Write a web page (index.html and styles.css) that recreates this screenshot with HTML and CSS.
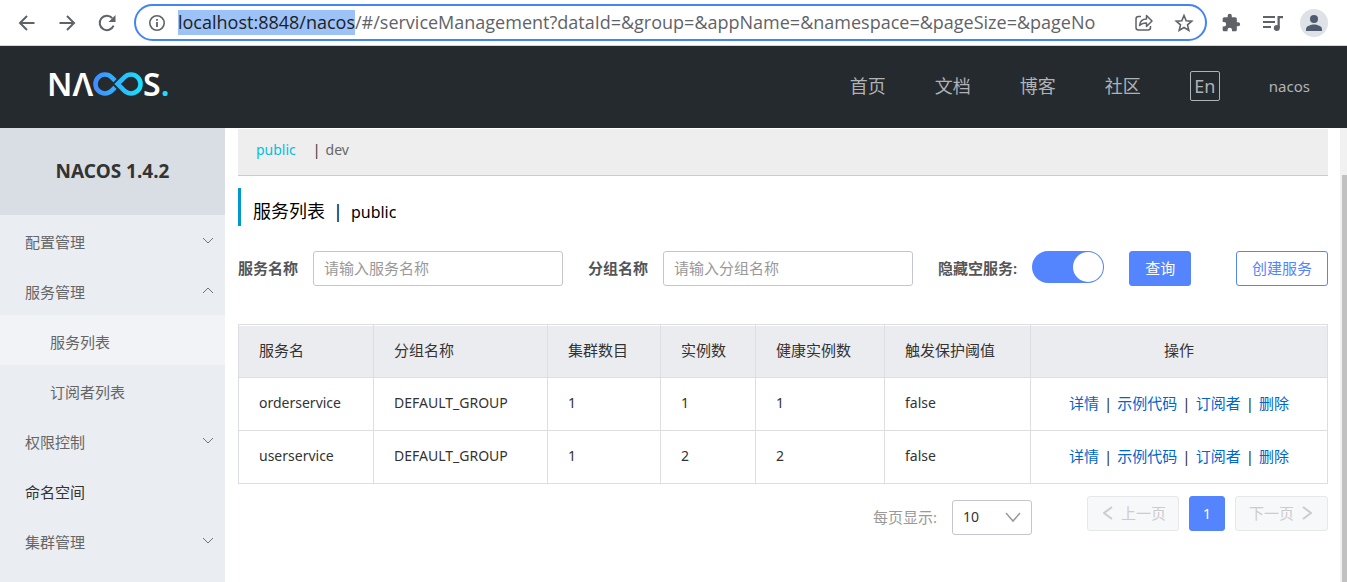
FILE: index.html
```html
<!DOCTYPE html>
<html lang="zh-CN">
<head>
  <meta charset="UTF-8">
  <meta name="viewport" content="width=device-width, initial-scale=1.0">
  <title>Nacos</title>
  <link rel="stylesheet" href="styles.css">
</head>
<body>

  <div class="browser-bar">
    <button class="bar-btn" type="button" aria-label="Back">
      <svg width="18" height="18" viewBox="0 0 18 18"><path d="M16.500 9H2.500M9 2L2 9l7 7" fill="none" stroke="#5f6368" stroke-width="2"/></svg>
    </button>
    <button class="bar-btn" type="button" aria-label="Forward">
      <svg width="18" height="18" viewBox="0 0 18 18"><path d="M1.500 9h14M9 2l7 7-7 7" fill="none" stroke="#5f6368" stroke-width="2"/></svg>
    </button>
    <button class="bar-btn" type="button" aria-label="Reload">
      <svg width="18" height="18" viewBox="0 0 18 18"><path d="M15.600 11.600A7.200 7.200 0 1 1 14.200 4" fill="none" stroke="#5f6368" stroke-width="2"/><path d="M17.500 1v7h-7z" fill="#5f6368"/></svg>
    </button>
    <div class="address">
      <svg class="info" width="18" height="18" viewBox="0 0 18 18"><circle cx="9" cy="9" r="7.200" fill="none" stroke="#5f6368" stroke-width="1.600"/><path d="M9 8v5M9 5v1.800" stroke="#5f6368" stroke-width="1.800"/></svg>
      <div class="url"><span class="selected">localhost:8848/nacos</span>/#/serviceManagement?dataId=&amp;group=&amp;appName=&amp;namespace=&amp;pageSize=&amp;pageNo</div>
      <button class="bar-btn" type="button" aria-label="Share">
        <svg width="20" height="20" viewBox="0 0 20 20"><path d="M7 3.500H4.500Q2 3.500 2 6v8.500Q2 17 4.500 17h9.500Q16.500 17 16.500 14.500V13M5.500 12.500C6 8.500 8.500 6 12.500 6V2.500l5.500 5.500-5.500 5.500V10C9.500 10 7.500 10.500 5.500 12.500z" fill="none" stroke="#5f6368" stroke-width="1.500" stroke-linejoin="round"/></svg>
      </button>
      <button class="bar-btn" type="button" aria-label="Bookmark">
        <svg width="20" height="20" viewBox="0 0 20 20"><path d="M10 2.500l2.200 5.200 5.600.500-4.300 3.700 1.300 5.500-4.800-2.900-4.800 2.900 1.300-5.500L2.200 8.200l5.600-.500z" fill="none" stroke="#5f6368" stroke-width="1.600"/></svg>
      </button>
    </div>
    <button class="bar-btn" type="button" aria-label="Extensions">
      <svg width="20" height="20" viewBox="0 0 24 24"><path d="M20.500 11H19V7c0-1.100-.900-2-2-2h-4V3.500a2.500 2.500 0 0 0-5 0V5H4c-1.100 0-2 .900-2 2v3.800h1.500a2.700 2.700 0 0 1 0 5.400H2V20c0 1.100.900 2 2 2h3.800v-1.500a2.700 2.700 0 0 1 5.400 0V22H17c1.100 0 2-.900 2-2v-4h1.500a2.500 2.500 0 0 0 0-5z" fill="#5f6368"/></svg>
    </button>
    <button class="bar-btn media" type="button" aria-label="Media">
      <svg width="20" height="18" viewBox="0 0 20 18"><path d="M0 3h12M0 8h12M0 13h8" stroke="#5f6368" stroke-width="2"/><path d="M14.500 2H20v2.200h-3.200V14h-2.300z" fill="#5f6368"/><circle cx="13.800" cy="14" r="3" fill="#5f6368"/></svg>
    </button>
    <button class="bar-btn" type="button" aria-label="Profile">
      <svg width="28" height="28" viewBox="0 0 28 28"><circle cx="14" cy="14" r="14" fill="#dee1e6"/><circle cx="14" cy="10" r="4" fill="#4f5b6e"/><path d="M6 22v-2c0-3 5-4.500 8-4.500s8 1.500 8 4.500v2z" fill="#4f5b6e"/></svg>
    </button>
  </div>

  <header class="header">
    <a class="logo" href="#" aria-label="Nacos">
      <span>NΛ</span>
      <svg width="50" height="24" viewBox="0 0 50 24">
        <defs>
          <linearGradient id="loop" gradientUnits="userSpaceOnUse" x1="0" y1="0" x2="50" y2="0">
            <stop offset="0" stop-color="#4489ff"/>
            <stop offset="1" stop-color="#18e2fa"/>
          </linearGradient>
        </defs>
        <path d="M22 8.600L18.700 5.300A9.500 9.500 0 1 0 18.700 18.700L22 15.400M24.600 12L31.300 5.300A9.500 9.500 0 1 1 31.300 18.700z" fill="none" stroke="url(#loop)" stroke-width="4.600"/>
      </svg>
      <span>S</span><span class="dot">.</span>
    </a>
    <nav class="nav">
      <a href="#">首页</a>
      <a href="#">文档</a>
      <a href="#">博客</a>
      <a href="#">社区</a>
      <button class="lang" type="button">En</button>
      <a class="user" href="#">nacos</a>
    </nav>
  </header>

  <div class="layout">
    <aside class="sidebar">
      <h1 class="version">NACOS 1.4.2</h1>
      <ul class="menu">
        <li><a href="#">配置管理<svg width="12" height="12" viewBox="0 0 12 12"><path d="M1 3l5 5 5-5"/></svg></a></li>
        <li><a href="#">服务管理<svg width="12" height="12" viewBox="0 0 12 12"><path d="M1 8l5-5 5 5"/></svg></a></li>
        <li><a class="sub active" href="#">服务列表</a></li>
        <li><a class="sub" href="#">订阅者列表</a></li>
        <li><a href="#">权限控制<svg width="12" height="12" viewBox="0 0 12 12"><path d="M1 3l5 5 5-5"/></svg></a></li>
        <li><a class="leaf" href="#">命名空间</a></li>
        <li><a href="#">集群管理<svg width="12" height="12" viewBox="0 0 12 12"><path d="M1 3l5 5 5-5"/></svg></a></li>
      </ul>
    </aside>

    <main class="main">
      <div class="namespaces">
        <a class="current" href="#">public</a>
        <span class="bar">|</span>
        <a href="#">dev</a>
      </div>

      <h2 class="title">服务列表<span class="sep">|</span><span class="ns">public</span></h2>

      <form class="filters">
        <label for="service">服务名称</label>
        <input class="text" type="text" id="service" placeholder="请输入服务名称">
        <label for="group">分组名称</label>
        <input class="text" type="text" id="group" placeholder="请输入分组名称">
        <label for="hide">隐藏空服务:</label>
        <input class="switch" type="checkbox" id="hide" checked>
        <button class="btn primary" type="button">查询</button>
        <button class="btn create" type="button">创建服务</button>
      </form>

      <table class="services">
        <colgroup>
          <col class="c-name"><col class="c-group"><col class="c-cluster"><col class="c-count"><col class="c-healthy"><col class="c-protect"><col>
        </colgroup>
        <thead>
          <tr>
            <th>服务名</th>
            <th>分组名称</th>
            <th>集群数目</th>
            <th>实例数</th>
            <th>健康实例数</th>
            <th>触发保护阈值</th>
            <th class="actions">操作</th>
          </tr>
        </thead>
        <tbody>
          <tr>
            <td>orderservice</td>
            <td>DEFAULT_GROUP</td>
            <td>1</td>
            <td>1</td>
            <td>1</td>
            <td>false</td>
            <td class="actions"><a href="#">详情</a><i>|</i><a href="#">示例代码</a><i>|</i><a href="#">订阅者</a><i>|</i><a href="#">删除</a></td>
          </tr>
          <tr>
            <td>userservice</td>
            <td>DEFAULT_GROUP</td>
            <td>1</td>
            <td>2</td>
            <td>2</td>
            <td>false</td>
            <td class="actions"><a href="#">详情</a><i>|</i><a href="#">示例代码</a><i>|</i><a href="#">订阅者</a><i>|</i><a href="#">删除</a></td>
          </tr>
        </tbody>
      </table>

      <div class="pager">
        <label for="size">每页显示:</label>
        <div class="select">
          <select id="size">
            <option>10</option>
            <option>20</option>
          </select>
          <svg width="16" height="12" viewBox="0 0 16 12"><path d="M1 1l7 8 7-8" fill="none" stroke="#999" stroke-width="1.500"/></svg>
        </div>
        <div class="pages">
          <button class="page" type="button" disabled><svg width="10" height="14" viewBox="0 0 10 14"><path d="M9 1L1 7l8 6"/></svg>上一页</button>
          <button class="page on" type="button">1</button>
          <button class="page next" type="button" disabled>下一页<svg width="10" height="14" viewBox="0 0 10 14"><path d="M1 1l8 6-8 6"/></svg></button>
        </div>
      </div>
    </main>

    <div class="scrollbar"><div class="thumb"></div></div>
  </div>

</body>
</html>
```
FILE: styles.css
```css
* {
  box-sizing: border-box;
}

body {
  display: flex;
  flex-direction: column;
  min-height: 100vh;
  margin: 0;
  color: #333;
  background: #fff;
  font: 15px/20px "Noto Sans", "Noto Sans CJK SC", sans-serif;
}

a {
  color: inherit;
  text-decoration: none;
}

button, input, select {
  font: inherit;
}

/* browser bar */
.browser-bar {
  display: flex;
  align-items: center;
  gap: 22px;
  height: 46px;
  padding: 0 19px 0 18px;
  border-bottom: 1px solid #d5d7da;
}

.bar-btn {
  display: flex;
  padding: 0;
  border: 0;
  background: none;
}

.media {
  margin-right: -5px;
}

.address {
  display: flex;
  flex: 1;
  align-items: center;
  gap: 20px;
  min-width: 0;
  height: 37px;
  margin: 0 -8px 0 -4px;
  padding: 0 11px 0 12px;
  border: 2px solid #4285f4;
  border-radius: 19px;
}

.address .info {
  flex: none;
  margin-right: -8px;
}

.url {
  flex: 1;
  overflow: hidden;
  color: #5f6368;
  font-family: "Open Sans", sans-serif;
  font-size: 18px;
  line-height: 25px;
  white-space: nowrap;
}

.selected {
  display: inline-block;
  color: #202124;
  background: #9cc2f8;
}

/* header */
.header {
  display: flex;
  align-items: center;
  justify-content: space-between;
  height: 82px;
  padding: 0 37px 2px 47px;
  background: #252a2f;
}

.logo {
  display: flex;
  align-items: center;
  padding-bottom: 4px;
  color: #fff;
  font-size: 32px;
  font-weight: 600;
  line-height: 32px;
}

.logo svg {
  margin-bottom: 1px;
}

.dot {
  color: #18e2fa;
}

.nav {
  display: flex;
  align-items: center;
  gap: 49px;
  color: #b0b3b5;
  font-size: 18px;
}

.lang {
  width: 30px;
  height: 30px;
  padding: 0;
  border: 1px solid #b0b3b5;
  border-radius: 2px;
  color: inherit;
  background: none;
  line-height: 26px;
}

.user {
  font-size: 15px;
}

/* sidebar */
.layout {
  display: flex;
  flex: 1;
}

.sidebar {
  width: 225px;
  background: #eaedf2;
}

.version {
  height: 87px;
  margin: 0;
  background: #d9dde4;
  font-size: 19px;
  line-height: 87px;
  text-align: center;
}

.menu {
  margin: 0;
  padding: 0;
  list-style: none;
}

.menu a {
  display: flex;
  align-items: center;
  justify-content: space-between;
  height: 50px;
  padding: 4px 11px 0 25px;
  color: #666;
}

.menu .sub {
  padding-left: 50px;
}

.menu .active {
  background: #f2f3f7;
}

.menu .leaf {
  color: #333;
}

.menu svg {
  margin-bottom: 3px;
  fill: none;
  stroke: #70757a;
}

/* content */
.main {
  flex: 1;
  padding: 1px 12px 0 13px;
}

.namespaces {
  display: flex;
  height: 47px;
  padding: 11px 18px 0;
  border-bottom: 1px solid #ccc;
  color: #666;
  background: #eee;
  font-size: 14px;
}

.namespaces .current {
  margin-right: 17px;
  color: #00c1de;
}

.namespaces .bar {
  margin-right: 5px;
  color: #333;
}

.title {
  height: 38px;
  margin: 12px 0 25px;
  padding-left: 12px;
  border-left: 3px solid #09c;
  color: #000;
  font-size: 18px;
  font-weight: 400;
  line-height: 46px;
}

.title .sep {
  margin: 0 8px;
}

.title .ns {
  font-size: 16px;
}

.filters {
  display: flex;
  align-items: center;
  margin-bottom: 38px;
}

.filters label {
  margin-right: 15px;
  padding-bottom: 1px;
  color: #555;
  font-weight: 600;
}

.text {
  width: 250px;
  height: 35px;
  margin-right: 25px;
  padding: 0 10px 2px;
  border: 1px solid #c4c6cf;
  border-radius: 3px;
}

.text::placeholder {
  color: #999;
}

.switch {
  display: flex;
  justify-content: flex-end;
  appearance: none;
  width: 72px;
  height: 32px;
  margin: 0 25px 3px 0;
  padding: 1px;
  border-radius: 16px;
  background: #5584ff;
}

.switch::before {
  content: "";
  width: 30px;
  height: 30px;
  border-radius: 50%;
  background: #fff;
}

.btn {
  height: 35px;
  padding: 0 15px 2px;
  border: 1px solid #5584ff;
  border-radius: 3px;
  color: #5584ff;
  background: #fff;
}

.primary {
  color: #fff;
  background: #5584ff;
}

.create {
  margin-left: auto;
}

.services {
  width: 100%;
  border-collapse: collapse;
  table-layout: fixed;
}

.services th,
.services td {
  height: 53px;
  padding: 0 20px 2px;
  border: 1px solid #dcdee3;
  text-align: left;
}

.services th {
  background: #ebecf0;
  box-shadow: inset 0 1px #fff;
  font-weight: 400;
}

.services td {
  font-size: 14px;
}

.c-name { width: 135px; }
.c-group { width: 174px; }
.c-cluster { width: 113px; }
.c-count { width: 95px; }
.c-healthy { width: 129px; }
.c-protect { width: 146px; }

.services .actions {
  font-size: 15px;
  text-align: center;
}

.actions a {
  color: #06c;
}

.actions i {
  margin: 0 5px;
  font-style: normal;
}

.pager {
  display: flex;
  align-items: flex-start;
  justify-content: flex-end;
  margin-top: 12px;
}

.pager label {
  margin: 11px 15px 0 0;
  color: #999;
}

.select {
  display: flex;
  align-items: center;
  margin: 4px 55px 0 0;
}

.select select {
  appearance: none;
  width: 80px;
  height: 35px;
  padding: 0 10px 1px;
  border: 1px solid #c4c6cf;
  border-radius: 3px;
  color: #333;
  background: #fff;
  font-size: 14px;
}

.select svg {
  margin-left: -27px;
  margin-right: 11px;
  pointer-events: none;
}

.pages {
  display: flex;
  gap: 10px;
}

.page {
  display: flex;
  align-items: center;
  gap: 8px;
  height: 35px;
  padding: 0 12px 1px 15px;
  border: 1px solid #e6e7eb;
  border-radius: 3px;
  color: #ccc;
  background: #f7f8fa;
}

.page svg {
  fill: none;
  stroke: #ccc;
  stroke-width: 2;
}

.page.on {
  padding: 0 13px;
  border-color: #5584ff;
  color: #fff;
  background: #5584ff;
  font-size: 14px;
}

.page.next {
  padding: 0 15px 1px 13px;
}

/* scroll track at the right edge */
.scrollbar {
  width: 7px;
  padding: 47px 0 0 2px;
  background: #f1f1f1;
}

.thumb {
  height: 100%;
  background: #c1c1c1;
}
```
